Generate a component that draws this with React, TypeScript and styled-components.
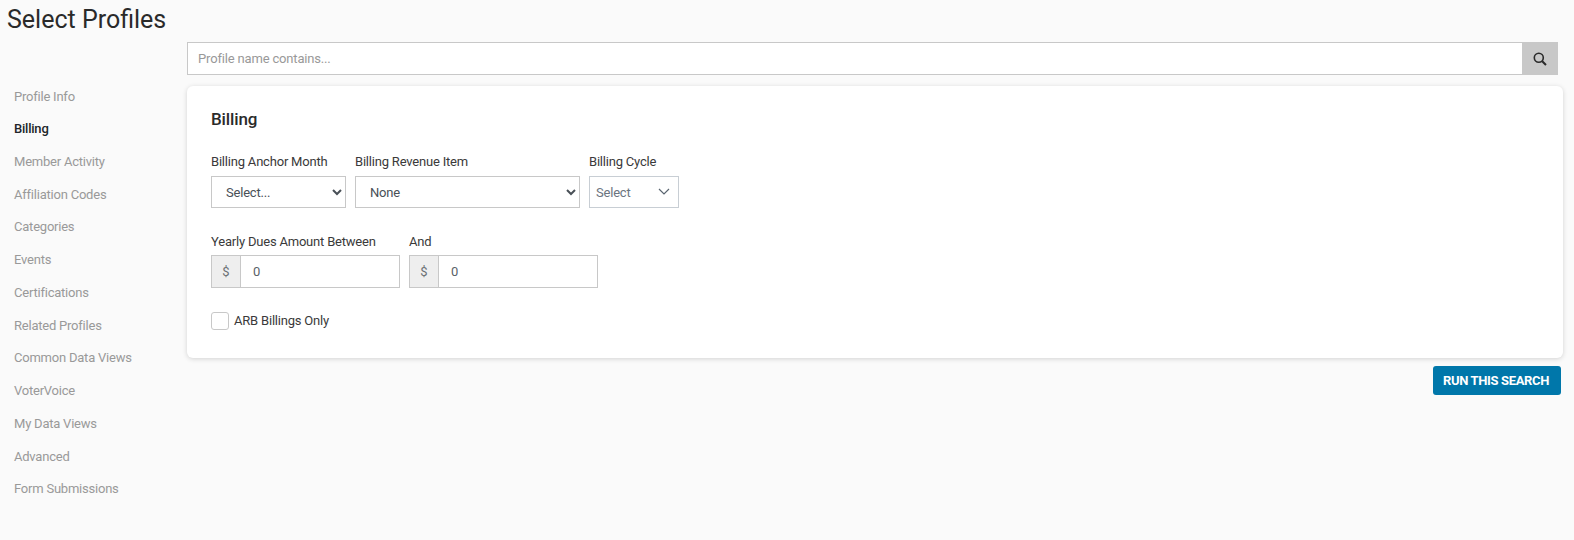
import React from "react"
import styled, { createGlobalStyle } from "styled-components"

const GlobalStyle = createGlobalStyle`
  html, body {
    margin: 0;
    background: #fafafa;
    font-family: Roboto, "Liberation Sans", sans-serif;
    color: #212529;
  }
  * {
    box-sizing: border-box;
  }
`

const Page = styled.div`
  height: 540px;
  overflow: hidden;
`

const PageTitle = styled.h1`
  margin: 0;
  padding: 5px 0 0 7px;
  height: 42px;
  font-size: 25px;
  line-height: 30px;
  font-weight: 400;
  color: #2a2a2a;
`

const Columns = styled.div`
  display: grid;
  grid-template-columns: 187px 1fr;
`

const Sidebar = styled.nav`
  display: flex;
  flex-direction: column;
  padding: 38.6px 0 0 14px;
`

const SideLink = styled.a<{ $active?: boolean }>`
  height: 32.72px;
  line-height: 32.72px;
  font-size: 13px;
  letter-spacing: -0.22px;
  color: ${(p) => (p.$active ? "#212529" : "#999")};
  font-weight: ${(p) => (p.$active ? 500 : 400)};
`

const Main = styled.main`
  display: flex;
  flex-direction: column;
  padding-right: 11px;
`

const SearchBar = styled.div`
  display: flex;
  height: 33px;
  margin-right: 5px;
`

const SearchInput = styled.input`
  flex: 1;
  min-width: 0;
  border: 1px solid #c8c8c8;
  border-right: 0;
  background: #fff;
  padding: 0 10px;
  font: 13px Roboto, sans-serif;
  letter-spacing: -0.17px;
  outline: none;
  &::placeholder {
    color: #999;
    opacity: 1;
  }
`

const SearchButton = styled.button`
  width: 36px;
  padding: 0;
  border: 0;
  background: #c8c8c8;
  display: flex;
  align-items: center;
  justify-content: center;
`

const Card = styled.section`
  margin-top: 11px;
  height: 272px;
  background: #fff;
  border-radius: 6px;
  box-shadow: 0 1px 5px rgba(0, 0, 0, 0.16);
  padding: 24px;
`

const CardTitle = styled.h2`
  margin: 0 0 24px;
  font-size: 17px;
  line-height: 19px;
  font-weight: 500;
  letter-spacing: -0.12px;
  color: #2a2a2a;
`

const FieldRow = styled.div<{ $spacing: number }>`
  display: flex;
  gap: 9px;
  margin-bottom: ${(p) => p.$spacing}px;
`

const Field = styled.div`
  display: flex;
  flex-direction: column;
`

const Label = styled.label<{ $height: number }>`
  font-size: 13px;
  line-height: 17px;
  height: ${(p) => p.$height}px;
  letter-spacing: -0.2px;
  color: #3a3a3a;
`

const Select = styled.select<{ $width: number }>`
  width: ${(p) => p.$width}px;
  height: 32px;
  border: 1px solid #c8c8c8;
  border-radius: 0;
  background: #fff;
  padding: 0 10px;
  font: 13px Roboto, sans-serif;
  letter-spacing: -0.2px;
  color: #495057;
  outline: none;
`

const CycleSelect = styled.div`
  width: 90px;
  height: 32px;
  border: 1px solid #c8ced4;
  background: #fff;
  padding: 0 8px 0 6px;
  font-size: 13px;
  letter-spacing: -0.2px;
  color: #6b7480;
  display: flex;
  align-items: center;
  justify-content: space-between;
`

const Chevron = styled.svg`
  margin-bottom: 2px;
`

const InputGroup = styled.div`
  display: flex;
  width: 189px;
  height: 33px;
  border: 1px solid #c8c8c8;
  background: #fff;
`

const Addon = styled.span`
  width: 29px;
  flex: none;
  display: flex;
  align-items: center;
  justify-content: center;
  background: #eee;
  border-right: 1px solid #c8c8c8;
  font-size: 13px;
  color: #6b7075;
`

const AmountInput = styled.input`
  flex: 1;
  min-width: 0;
  border: 0;
  padding: 0 12px;
  font: 13px Roboto, sans-serif;
  color: #5a6168;
  outline: none;
`

const CheckRow = styled.div`
  display: flex;
  align-items: center;
  gap: 5px;
  margin-top: 22px;
`

const CheckBox = styled.span`
  width: 18px;
  height: 18px;
  border: 1px solid #c8c8c8;
  border-radius: 3px;
  background: #fff;
`

const CheckLabel = styled.label`
  font-size: 13px;
  letter-spacing: -0.2px;
  padding-bottom: 2px;
  color: #3a3a3a;
`

const Actions = styled.div`
  display: flex;
  justify-content: flex-end;
  margin-top: 8px;
  padding-right: 2px;
`

const RunButton = styled.button`
  width: 128px;
  height: 29px;
  padding: 0 2px 0 0;
  border: 0;
  border-radius: 3px;
  background: #0077aa;
  color: #fff;
  font: 700 13px Roboto, sans-serif;
  letter-spacing: -0.35px;
`

const sections = [
  "Profile Info",
  "Billing",
  "Member Activity",
  "Affiliation Codes",
  "Categories",
  "Events",
  "Certifications",
  "Related Profiles",
  "Common Data Views",
  "VoterVoice",
  "My Data Views",
  "Advanced",
  "Form Submissions",
]

export default function App() {
  return (
    <Page>
      <GlobalStyle />
      <PageTitle>Select Profiles</PageTitle>
      <Columns>
        <Sidebar>
          {sections.map((name) => (
            <SideLink key={name} $active={name === "Billing"}>
              {name}
            </SideLink>
          ))}
        </Sidebar>
        <Main>
          <SearchBar>
            <SearchInput placeholder="Profile name contains..." />
            <SearchButton>
              <svg width="14" height="14" viewBox="0 0 14 14" fill="none" stroke="#2a2a2a" strokeWidth="1.6">
                <circle cx="5.8" cy="5.8" r="4.5" />
                <path d="M9.2 9.2 13 13" strokeWidth="2" />
              </svg>
            </SearchButton>
          </SearchBar>
          <Card>
            <CardTitle>Billing</CardTitle>
            <FieldRow $spacing={25}>
              <Field>
                <Label $height={23}>Billing Anchor Month</Label>
                <Select $width={135}>
                  <option>Select...</option>
                </Select>
              </Field>
              <Field>
                <Label $height={23}>Billing Revenue Item</Label>
                <Select $width={225}>
                  <option>None</option>
                </Select>
              </Field>
              <Field>
                <Label $height={23}>Billing Cycle</Label>
                <CycleSelect>
                  Select
                  <Chevron width="12" height="7" viewBox="0 0 12 7" fill="none" stroke="#5a6570" strokeWidth="1.2">
                    <path d="M1 1 6 6 11 1" />
                  </Chevron>
                </CycleSelect>
              </Field>
            </FieldRow>
            <FieldRow $spacing={24}>
              <Field>
                <Label $height={22}>Yearly Dues Amount Between</Label>
                <InputGroup>
                  <Addon>$</Addon>
                  <AmountInput defaultValue="0" />
                </InputGroup>
              </Field>
              <Field>
                <Label $height={22}>And</Label>
                <InputGroup>
                  <Addon>$</Addon>
                  <AmountInput defaultValue="0" />
                </InputGroup>
              </Field>
            </FieldRow>
            <CheckRow>
              <CheckBox />
              <CheckLabel>ARB Billings Only</CheckLabel>
            </CheckRow>
          </Card>
          <Actions>
            <RunButton>RUN THIS SEARCH</RunButton>
          </Actions>
        </Main>
      </Columns>
    </Page>
  )
}
